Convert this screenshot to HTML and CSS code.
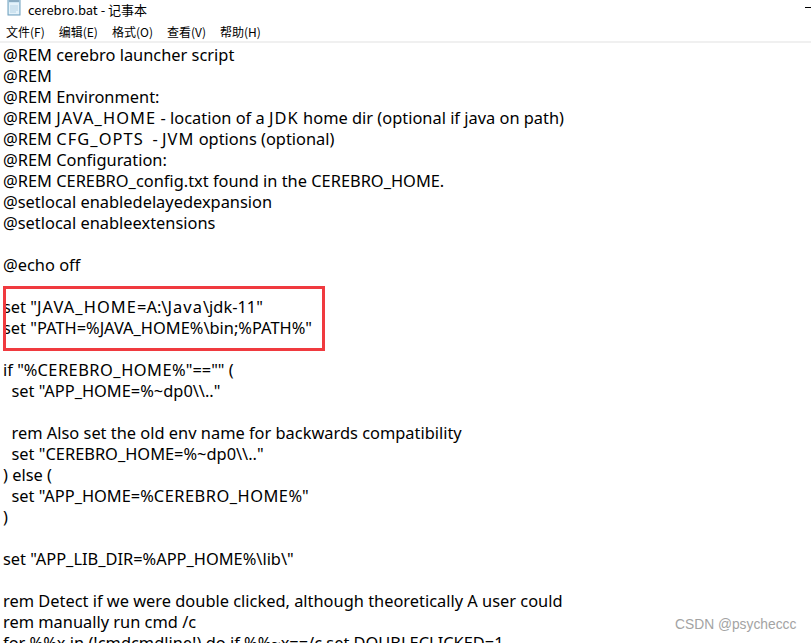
FILE: index.html
```html
<!DOCTYPE html>
<html lang="zh-CN">
<head>
    <meta charset="UTF-8">
    <title>cerebro.bat - 记事本</title>
    <link rel="stylesheet" href="styles.css">
</head>
<body>
    <div class="window">
        <div class="titlebar">
            <svg class="app-icon" width="16" height="18" viewBox="0 0 16 18">
                <rect x="2" y="1" width="12" height="16" fill="#cfe6f3" stroke="#6f9fbd" stroke-width="1"/>
                <rect x="3" y="5" width="10" height="11" fill="#e4f2fa"/>
                <path d="M4 1v3M6 1v3M8 1v3M10 1v3M12 1v3" stroke="#44708f" stroke-width="1"/>
                <path d="M4 8h8M4 10h8M4 12h8M4 14h6" stroke="#a9cbe0" stroke-width="0.8"/>
            </svg>
            <span class="title">cerebro.bat - 记事本</span>
            <span class="min-btn"></span>
        </div>
        <div class="menubar">
            <span>文件(F)</span>
            <span>编辑(E)</span>
            <span>格式(O)</span>
            <span>查看(V)</span>
            <span>帮助(H)</span>
        </div>
        <div class="separator"></div>
        <div class="editor">
            <div class="line">@REM cerebro launcher script</div>
            <div class="line">@REM</div>
            <div class="line">@REM Environment:</div>
            <div class="line">@REM <span class="wide">JAVA_HOME</span> - location of a <span class="wide">JDK</span> home dir (optional if java on path)</div>
            <div class="line">@REM <span class="wide">CFG_OPTS</span>  - <span class="wide">JVM</span> options (optional)</div>
            <div class="line">@REM Configuration:</div>
            <div class="line">@REM CEREBRO_config.txt found in the CEREBRO_HOME.</div>
            <div class="line">@setlocal enabledelayedexpansion</div>
            <div class="line">@setlocal enableextensions</div>
            <div class="line"></div>
            <div class="line">@echo off</div>
            <div class="line"></div>
            <div class="line">set "<span class="wide">JAVA_HOME</span>=A:\<span class="wide">Java</span>\jdk-11"</div>
            <div class="line">set "PATH=%JAVA_HOME%\bin;%PATH%"</div>
            <div class="line"></div>
            <div class="line">if "%<span class="semi">CEREBRO_HOME</span>%"=="" (</div>
            <div class="line">  set "APP_HOME=%~dp0\\.."</div>
            <div class="line"></div>
            <div class="line">  rem Also set the old env name for backwards compatibility</div>
            <div class="line">  set "CEREBRO_HOME=%~dp0\\.."</div>
            <div class="line">) else (</div>
            <div class="line">  set "APP_HOME=%<span class="semi">CEREBRO_HOME</span>%"</div>
            <div class="line">)</div>
            <div class="line"></div>
            <div class="line">set "APP_LIB_DIR=%APP_HOME%\lib\"</div>
            <div class="line"></div>
            <div class="line">rem Detect if we were double clicked, although theoretically A user could</div>
            <div class="line">rem manually run cmd /c</div>
            <div class="line">for %%x in (!cmdcmdline!) do if %%~x==/c set DOUBLECLICKED=1</div>
            <div class="highlight"></div>
        </div>
        <div class="watermark">CSDN @psycheccc</div>
    </div>
</body>
</html>
```

FILE: styles.css
```css
html, body {
    margin: 0;
    height: 100%;
    overflow: hidden;
    background: #fff;
}
.window {
    position: relative;
    height: 100%;
    color: #000;
    font-family: "Noto Sans CJK SC", "Noto Sans", sans-serif;
}
.titlebar {
    display: flex;
    align-items: center;
    height: 19px;
    padding-left: 6px;
    font-size: 13px;
}
.app-icon { margin-top: -6px; }
.title { margin-left: 6px; }
.min-btn {
    margin-left: auto;
    margin-right: -6px;
    width: 12px;
    height: 1px;
    background: #000;
    margin-top: -5px;
}
.menubar {
    display: flex;
    gap: 14px;
    margin-top: 3px;
    height: 19px;
    line-height: 19px;
    padding-left: 6px;
    font-size: 12px;
}
.separator {
    height: 2px;
    background: #f0f0f0;
}
.editor {
    position: relative;
    padding: 1px 0 0 3px;
    font-family: "Noto Sans", sans-serif;
    font-size: 16.4px;
    line-height: 21px;
}
.line {
    height: 21px;
    white-space: pre;
}
.wide { letter-spacing: 1.1px; }
.semi { letter-spacing: 0.5px; }
.highlight {
    position: absolute;
    left: 3px;
    top: 243px;
    width: 316px;
    height: 59px;
    border: 3px solid #f03a3f;
}
.watermark {
    position: absolute;
    left: 675px;
    top: 617px;
    font-family: "Liberation Sans", Arial, sans-serif;
    font-size: 13.8px;
    color: #a3a3a3;
}
```
